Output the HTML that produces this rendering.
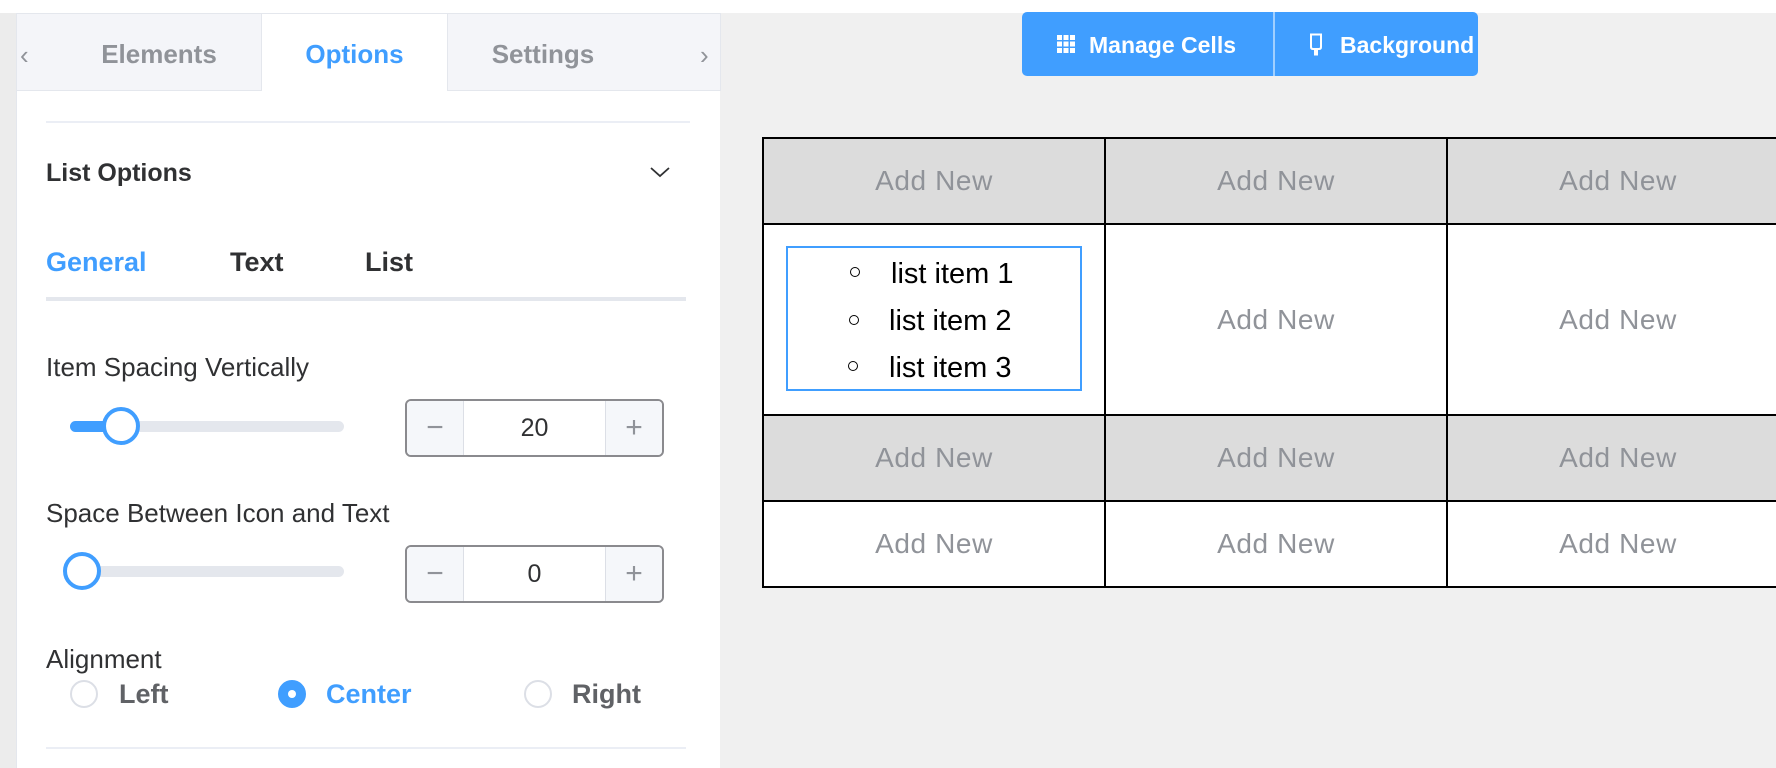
<!DOCTYPE html>
<html><head><meta charset="utf-8"><style>
*{box-sizing:border-box;margin:0;padding:0}
body{width:1776px;height:768px;overflow:hidden;background:#f0f0f0;font-family:"Liberation Sans",sans-serif;position:relative}
.abs{position:absolute}
.top{left:0;top:0;width:1776px;height:13px;background:#fff}
.panel{left:16px;top:13px;width:704px;height:755px;background:#fff;border-left:1px solid #e4e7ed}
.tab{top:13px;height:78px;padding-top:4px;background:#f4f5f9;border:1px solid #e4e7ed;color:#909399;font-size:26px;font-weight:bold;display:flex;align-items:center;justify-content:center}
.lbl{font-size:26px;color:#303133;white-space:nowrap}
.track{height:11px;background:#e4e7ed;border-radius:6px}
.thumb{width:38px;height:38px;border:4px solid #409eff;border-radius:50%;background:#fff}
.num{width:259px;height:58px;border:2px solid #8a8a8e;border-radius:6px;background:#fff;overflow:hidden}
.num .m,.num .p{position:absolute;top:0;width:57px;height:100%;background:#f5f7fa;color:#909399;font-size:30px;display:flex;align-items:center;justify-content:center;font-weight:300}
.num .m{left:0;border-right:1px solid #dcdfe6}.num .p{right:0;border-left:1px solid #dcdfe6}
.num .v{position:absolute;left:57px;right:57px;top:0;height:100%;display:flex;align-items:center;justify-content:center;font-size:25px;color:#303133}
.radio{width:28px;height:28px;border:2px solid #dcdfe6;border-radius:50%;background:#fff}
.rt{font-size:27px;color:#606266;font-weight:bold}
.cell{display:flex;align-items:center;justify-content:center;color:#909399;font-size:28px;letter-spacing:.6px;border-right:2px solid #000;border-bottom:2px solid #000}
</style></head><body>
<div class="abs top"></div>
<div class="abs" style="left:0;top:13px;width:16px;height:755px;background:#ececec"></div>
<div class="abs panel"></div>
<div class="abs tab" style="left:16px;width:246px;padding-left:40px">Elements</div>
<div class="abs tab" style="left:261px;width:187px;background:#fff;border-bottom:none;color:#409eff">Options</div>
<div class="abs tab" style="left:447px;width:274px;padding-right:82px">Settings</div>
<div class="abs" style="left:20px;top:40px;color:#909399;font-size:26px">‹</div>
<div class="abs" style="left:700px;top:40px;color:#909399;font-size:26px">›</div>
<div class="abs" style="left:46px;top:121px;width:644px;height:2px;background:#ebeef5"></div>
<div class="abs lbl" style="left:46px;top:159px;font-size:25px;font-weight:bold;color:#303133">List Options</div>
<svg class="abs" style="left:649px;top:165px" width="22" height="14" viewBox="0 0 22 14"><path d="M2 3 L11 11 L20 3" fill="none" stroke="#303133" stroke-width="1.8"/></svg>
<div class="abs" style="left:46px;top:247px;font-size:27px;font-weight:bold;color:#409eff">General</div>
<div class="abs" style="left:230px;top:247px;font-size:27px;font-weight:bold;color:#303133">Text</div>
<div class="abs" style="left:365px;top:247px;font-size:27px;font-weight:bold;color:#303133">List</div>
<div class="abs" style="left:46px;top:297px;width:640px;height:4px;background:#e4e7ed"></div>
<div class="abs lbl" style="left:46px;top:352px">Item Spacing Vertically</div>
<div class="abs track" style="left:70px;top:421px;width:274px"></div>
<div class="abs track" style="left:70px;top:421px;width:52px;background:#409eff"></div>
<div class="abs thumb" style="left:102px;top:407px"></div>
<div class="abs num" style="left:405px;top:399px"><div class="m">−</div><div class="v">20</div><div class="p">+</div></div>
<div class="abs lbl" style="left:46px;top:498px">Space Between Icon and Text</div>
<div class="abs track" style="left:70px;top:566px;width:274px"></div>
<div class="abs thumb" style="left:63px;top:552px"></div>
<div class="abs num" style="left:405px;top:545px"><div class="m">−</div><div class="v">0</div><div class="p">+</div></div>
<div class="abs lbl" style="left:46px;top:644px">Alignment</div>
<div class="abs radio" style="left:70px;top:680px"></div>
<div class="abs rt" style="left:119px;top:679px">Left</div>
<div class="abs radio" style="left:278px;top:680px;border-color:#409eff;background:#409eff"><div style="position:absolute;left:8px;top:8px;width:8px;height:8px;border-radius:50%;background:#fff"></div></div>
<div class="abs rt" style="left:326px;top:679px;color:#409eff">Center</div>
<div class="abs radio" style="left:524px;top:680px"></div>
<div class="abs rt" style="left:572px;top:679px">Right</div>
<div class="abs" style="left:46px;top:747px;width:640px;height:2px;background:#ebeef5"></div>

<div class="abs" style="left:1022px;top:12px;width:456px;height:64px;background:#409eff;border-radius:5px"></div>
<div class="abs" style="left:1273px;top:12px;width:2px;height:64px;background:#a0cfff"></div>
<svg class="abs" style="left:1057px;top:35px" width="18" height="18" viewBox="0 0 18 18" fill="#fff"><rect x="0" y="0" width="5" height="5"/><rect x="6.5" y="0" width="5" height="5"/><rect x="13" y="0" width="5" height="5"/><rect x="0" y="6.5" width="5" height="5"/><rect x="6.5" y="6.5" width="5" height="5"/><rect x="13" y="6.5" width="5" height="5"/><rect x="0" y="13" width="5" height="5"/><rect x="6.5" y="13" width="5" height="5"/><rect x="13" y="13" width="5" height="5"/></svg>
<div class="abs" style="left:1089px;top:32px;color:#fff;font-size:23px;font-weight:bold">Manage Cells</div>
<svg class="abs" style="left:1309px;top:33px" width="14" height="24" viewBox="0 0 14 24"><path d="M2 1.5 H12 V14 Q12 16 10 16 H4 Q2 16 2 14 Z M6 16 V21.5 H8 V16" fill="none" stroke="#fff" stroke-width="2"/></svg>
<div class="abs" style="left:1340px;top:32px;color:#fff;font-size:23px;font-weight:bold">Background</div>

<div class="abs" style="left:762px;top:137px;width:1014px;height:451px;border-left:2px solid #000;border-top:2px solid #000">
<div class="abs cell" style="left:0;top:0;width:342px;height:86px;background:#dcdcdc">Add New</div>
<div class="abs cell" style="left:342px;top:0;width:342px;height:86px;background:#dcdcdc">Add New</div>
<div class="abs cell" style="left:684px;top:0;width:342px;height:86px;background:#dcdcdc">Add New</div>
<div class="abs cell" style="left:0;top:86px;width:342px;height:191px;background:#fff"></div>
<div class="abs cell" style="left:342px;top:86px;width:342px;height:191px;background:#fff">Add New</div>
<div class="abs cell" style="left:684px;top:86px;width:342px;height:191px;background:#fff">Add New</div>
<div class="abs cell" style="left:0;top:277px;width:342px;height:86px;background:#dcdcdc">Add New</div>
<div class="abs cell" style="left:342px;top:277px;width:342px;height:86px;background:#dcdcdc">Add New</div>
<div class="abs cell" style="left:684px;top:277px;width:342px;height:86px;background:#dcdcdc">Add New</div>
<div class="abs cell" style="left:0;top:363px;width:342px;height:86px;background:#fff">Add New</div>
<div class="abs cell" style="left:342px;top:363px;width:342px;height:86px;background:#fff">Add New</div>
<div class="abs cell" style="left:684px;top:363px;width:342px;height:86px;background:#fff">Add New</div>
</div>
<div class="abs" style="left:786px;top:246px;width:296px;height:145px;border:2px solid #409eff;background:#fff"></div>
<div class="abs" style="left:850px;top:267px;width:10px;height:10px;border:1.5px solid #000;border-radius:50%"></div>
<div class="abs" style="left:849px;top:315px;width:10px;height:10px;border:1.5px solid #000;border-radius:50%"></div>
<div class="abs" style="left:848px;top:361px;width:10px;height:10px;border:1.5px solid #000;border-radius:50%"></div>
<div class="abs" style="left:891px;top:258px;font-size:29px;color:#000">list item 1</div>
<div class="abs" style="left:889px;top:305px;font-size:29px;color:#000">list item 2</div>
<div class="abs" style="left:889px;top:352px;font-size:29px;color:#000">list item 3</div>
</body></html>
